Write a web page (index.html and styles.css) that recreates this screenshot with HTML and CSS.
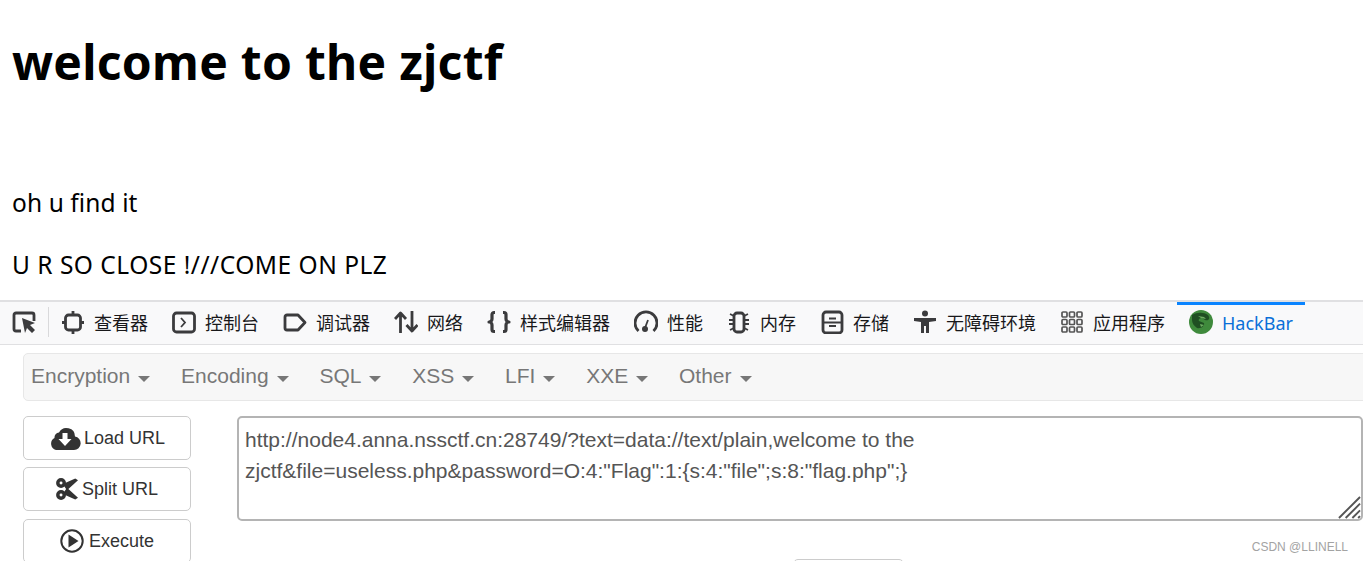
FILE: index.html
```html
<!DOCTYPE html>
<html lang="zh">
<head>
<meta charset="utf-8">
<title>welcome to the zjctf</title>
<link rel="stylesheet" href="styles.css">
</head>
<body>
<main class="page">
  <h1 class="title">welcome to the zjctf</h1>
  <p class="line first">oh u find it</p>
  <p class="line caps">U R SO CLOSE !///COME ON PLZ</p>
</main>
<section class="devtools">
  <div class="toolbar">
    <div class="picker">
      <svg class="ico" viewBox="0 0 24 24"><path class="st" d="M9 21H4a2 2 0 0 1-2-2V5a2 2 0 0 1 2-2h16a2 2 0 0 1 2 2v6"/><path class="fl" d="M10 8l13 5-5 2 5 5-3 3-5-5-2 5z"/></svg>
    </div>
    <div class="tab"><svg class="ico" viewBox="0 0 24 24"><rect class="st" x="4.500" y="5" width="15" height="15" rx="3"/><path class="st" d="M12 1v4M12 20v4M1 12.500h3.500M19.500 12.500H23"/></svg><span>查看器</span></div>
    <div class="tab"><svg class="ico" viewBox="0 0 24 24"><rect class="st" x="1.500" y="3" width="21" height="19" rx="3"/><path class="thin" d="M9 8l4 4.500-4 4.500"/></svg><span>控制台</span></div>
    <div class="tab"><svg class="ico" viewBox="0 0 24 24"><path class="st" d="M4 5h11l7 7.500-7 7.500H4a2 2 0 0 1-2-2V7a2 2 0 0 1 2-2z"/></svg><span>调试器</span></div>
    <div class="tab"><svg class="ico" viewBox="0 0 24 24"><path class="st" d="M6.500 23V3M1 9l5.500-6L12 9M18 1v20M12.500 15l5.500 6 5.500-6"/></svg><span>网络</span></div>
    <div class="tab"><svg class="ico" viewBox="0 0 24 24"><path class="st heavy" d="M8 2.500H7a2 2 0 0 0-2 2V9a3 3 0 0 1-3 3 3 3 0 0 1 3 3v4.500a2 2 0 0 0 2 2h1M16 2.500h1a2 2 0 0 1 2 2V9a3 3 0 0 0 3 3 3 3 0 0 0-3 3v4.500a2 2 0 0 1-2 2h-1"/></svg><span>样式编辑器</span></div>
    <div class="tab"><svg class="ico" viewBox="0 0 24 24"><path class="st" d="M4.500 21A11 11 0 1 1 19.500 21"/><path class="thin" d="M11 18l3-8"/><circle class="fl" cx="11" cy="19" r="3"/></svg><span>性能</span></div>
    <div class="tab"><svg class="ico" viewBox="0 0 24 24"><rect class="st" x="7" y="3" width="10" height="19" rx="3"/><path class="thin" d="M7 6L3 4M7 10H2M7 14H2M7 18l-4 2M17 6l4-2M17 10h5M17 14h5M17 18l4 2"/></svg><span>内存</span></div>
    <div class="tab"><svg class="ico" viewBox="0 0 24 24"><rect class="st" x="3" y="2" width="19" height="21" rx="3"/><path class="thin" d="M9 8.500h7M9 16h7M3 12.500h19"/></svg><span>存储</span></div>
    <div class="tab"><svg class="ico" viewBox="0 0 24 24"><circle class="fl" cx="12" cy="3.500" r="3"/><path class="fl" d="M1 8h22v3l-7 1v11h-3v-7h-2v7H8V12l-7-1z"/></svg><span>无障碍环境</span></div>
    <div class="tab"><svg class="ico" viewBox="0 0 24 24"><g class="cells"><rect x="2" y="2" width="5" height="5" rx="1"/><rect x="9.500" y="2" width="5" height="5" rx="1"/><rect x="17" y="2" width="5" height="5" rx="1"/><rect x="2" y="9.500" width="5" height="5" rx="1"/><rect x="9.500" y="9.500" width="5" height="5" rx="1"/><rect x="17" y="9.500" width="5" height="5" rx="1"/><rect x="2" y="17" width="5" height="5" rx="1"/><rect x="9.500" y="17" width="5" height="5" rx="1"/><rect x="17" y="17" width="5" height="5" rx="1"/></g></svg><span>应用程序</span></div>
    <div class="tab active"><svg class="ico" viewBox="0 0 24 24"><circle cx="12" cy="12" r="12" fill="#3f8a3c"/><path d="M3 5c5-3 12-3 16 0 3 4 0 6-3 5l-3-2c-2 0-4 1-3 3l5 2c1 3-3 6-7 5-3-2-5-5-5-8z" fill="#1f4f22"/><path d="M9 6l6 1 2 2-5-1zM11 14l4 1-3 2z" fill="#6fae63"/></svg><span class="tab-label">HackBar</span></div>
  </div>
  <div class="hackbar">
    <nav class="menu">
      <span class="menu-item">Encryption<i class="caret"></i></span>
      <span class="menu-item">Encoding<i class="caret"></i></span>
      <span class="menu-item">SQL<i class="caret"></i></span>
      <span class="menu-item">XSS<i class="caret"></i></span>
      <span class="menu-item">LFI<i class="caret"></i></span>
      <span class="menu-item">XXE<i class="caret"></i></span>
      <span class="menu-item">Other<i class="caret"></i></span>
    </nav>
    <div class="work">
      <div class="actions">
        <button class="btn load"><svg class="bico wide" viewBox="0 0 32 24"><path fill="#333" d="M26 10.500A8.500 8.500 0 0 0 10 6.500 5 5 0 0 0 5.500 12 6.500 6.500 0 0 0 7 24h18a6.800 6.800 0 0 0 1-13.500z"/><path fill="#fff" d="M13.500 7h5v6h4L16 20l-6.500-7h4z"/></svg>Load URL</button>
        <button class="btn"><svg class="bico" viewBox="0 0 24 24"><circle cx="5.500" cy="5.500" r="3.500" fill="none" stroke="#333" stroke-width="3.800"/><circle cx="5.500" cy="18.500" r="3.500" fill="none" stroke="#333" stroke-width="3.800"/><path fill="#333" d="M7.500 6.500L21 0.500l3 2L13.500 12 24 21.500 21 23.500 7.500 17.500l3.500-5.500z"/></svg>Split URL</button>
        <button class="btn exec"><svg class="bico big" viewBox="0 0 24 24"><circle cx="12" cy="12" r="10.700" fill="none" stroke="#333" stroke-width="2"/><path fill="#333" d="M8.500 5.500L18.500 12l-10 6.500z"/></svg>Execute</button>
      </div>
      <div class="url">http://node4.anna.nssctf.cn:28749/?text=data://text/plain,welcome to the<br>zjctf&amp;file=useless.php&amp;password=O:4:"Flag":1:{s:4:"file";s:8:"flag.php";}
        <svg class="grip" viewBox="0 0 24 24"><path d="M23 1L1 23M23 8L8 23M23 15l-8 8M23 21l-2 2"/></svg>
      </div>
    </div>
    <div class="stub"></div>
  </div>
</section>
<div class="mark">CSDN @LLINELL</div>
</body>
</html>
```
FILE: styles.css
```css
* { box-sizing: border-box; }
html, body { margin: 0; height: 561px; overflow: hidden; background: #fff; }
body { position: relative; font-family: "Noto Sans", "Noto Sans CJK SC", sans-serif; color: #000; }

.page { height: 300px; padding: 0 12px; overflow: hidden; }
.title { margin: 0; padding-top: 29px; font-size: 48px; line-height: 66px; font-weight: 700; letter-spacing: .26px; }
.line { margin: 0; font-size: 24.500px; line-height: 32px; }
.line.first { margin-top: 92px; letter-spacing: .1px; }
.line.caps { margin-top: 30px; letter-spacing: .5px; }

.devtools { height: 261px; overflow: hidden; }
.toolbar { display: flex; align-items: center; height: 45px; background: #f9f9fa; border-top: 2px solid #e0e0e2; border-bottom: 1px solid #e0e0e2; }
.picker { display: flex; align-items: center; width: 49px; height: 30px; margin-top: -2px; padding-left: 12px; background: linear-gradient(#d9d9db, #d9d9db) 48px 0 / 1px 100% no-repeat; }
.tab { display: flex; align-items: center; gap: 9px; height: 42px; padding: 0 12px 2px; font-family: "Noto Sans CJK SC", "Noto Sans", sans-serif; font-size: 18px; color: #18181a; white-space: nowrap; }
.tab.active { color: #0a6fd8; box-shadow: inset 0 3px 0 #0a84ff; font-family: "Noto Sans", sans-serif; }
.tab-label { padding-top: 2px; }
.ico { width: 24px; height: 24px; flex: none; }
.st { fill: none; stroke: #3b3b3d; stroke-width: 2.800; stroke-linejoin: round; }
.st.heavy { stroke-width: 3.200; }
.thin { fill: none; stroke: #3b3b3d; stroke-width: 1.800; }
.fl { fill: #3b3b3d; }
.cells rect { fill: none; stroke: #555; stroke-width: 1.700; }

.hackbar { padding: 8px 0 0 23px; font-family: "Liberation Sans", sans-serif; }
.menu { display: flex; align-items: center; height: 48px; margin-right: -8px; padding: 0 0 2px 7px; gap: 30.800px; background: #f7f7f7; border: 1px solid #e7e7e7; border-radius: 5px; color: #777; font-size: 21px; }
.menu-item { display: inline-flex; align-items: center; }
.caret { width: 0; height: 0; margin-left: 8px; margin-top: 5px; border-left: 6px solid transparent; border-right: 6px solid transparent; border-top: 6px solid #777; }

.work { display: flex; gap: 46px; height: 105px; margin-top: 15px; }
.actions { display: flex; flex-direction: column; gap: 7px; width: 168px; flex: none; }
.btn { display: flex; align-items: center; justify-content: center; gap: 4px; height: 44px; flex: none; padding: 0; background: #fff; border: 1px solid #ccc; border-radius: 5px; color: #333; font: 18px "Liberation Sans", sans-serif; }
.btn.load { gap: 3px; }
.btn.exec { margin-top: 1px; gap: 5px; }
.bico { width: 22px; height: 22px; flex: none; }
.bico.wide { width: 32px; height: 24px; }
.bico.big { width: 24px; height: 24px; }

.url { position: relative; flex: 1; height: 105px; padding: 6px 6px 0; background: #fff; border: 2px solid #b4b4b4; border-radius: 5px; color: #555; font-size: 21px; line-height: 31px; white-space: nowrap; }
.grip { position: absolute; right: 0; bottom: 0; width: 23px; height: 23px; }
.grip path { fill: none; stroke: #555; stroke-width: 2; }

.stub { width: 111px; height: 10px; margin: 38px 0 0 770px; background: #fff; border: 1px solid #ccc; border-radius: 5px; }
.mark { position: absolute; right: 15px; top: 540px; font: 12px "Liberation Sans", sans-serif; color: #a3a3a3; }
```
